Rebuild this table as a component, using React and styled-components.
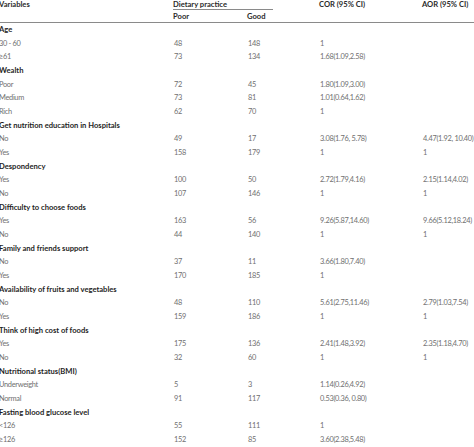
import React from "react";
import styled, { createGlobalStyle } from "styled-components";

const Global = createGlobalStyle`
  html, body { margin: 0; padding: 0; background: #fff; }
  body { font-family: Lato, "Open Sans", sans-serif; overflow: hidden; }
`;

const Table = styled.div`
  display: grid;
  grid-template-columns: 174px 74px 72px 103px 1fr;
  width: 474px;
  margin-left: -1px;
  font-size: 7.6px;
  color: #707070;
`;

const Head = styled.div`
  height: ${(p) => p.$h}px;
  line-height: ${(p) => p.$h}px;
  font-weight: 700;
  color: #2a2a2a;
  white-space: nowrap;
  grid-column: ${(p) => p.$span || "auto"};
  ${(p) => p.$rule && `border-bottom: 1px solid #8a8a8a; margin-right: 46px;`}
`;

const HeadRule = styled.div`
  grid-column: 1 / -1;
  height: 1px;
  background: #8a8a8a;
  margin-right: -2px;
`;

const Cell = styled.div`
  height: 13.68px;
  line-height: 13.68px;
  white-space: nowrap;
  font-size: 7.4px;
  letter-spacing: -0.3px;
  ${(p) => p.$cat && `grid-column: 1 / -1; font-weight: 700; color: #1e1e1e; letter-spacing: 0; font-size: 7.6px;`}
  ${(p) => p.$num && `padding-left: 1px;`}
`;

const data = [
  ["Age", [
    ["30 - 60", "48", "148", "1", ""],
    ["≥61", "73", "134", "1.68(1.09,2.58)", ""],
  ]],
  ["Wealth", [
    ["Poor", "72", "45", "1.80(1.09,3.00)", ""],
    ["Medium", "73", "81", "1.01(0.64,1.62)", ""],
    ["Rich", "62", "70", "1", ""],
  ]],
  ["Get nutrition education in Hospitals", [
    ["No", "49", "17", "3.08(1.76, 5.78)", "4.47(1.92, 10.40)"],
    ["Yes", "158", "179", "1", "1"],
  ]],
  ["Despondency", [
    ["Yes", "100", "50", "2.72(1.79,4.16)", "2.15(1.14,4.02)"],
    ["No", "107", "146", "1", "1"],
  ]],
  ["Difficulty to choose foods", [
    ["Yes", "163", "56", "9.26(5.87,14.60)", "9.66(5.12,18.24)"],
    ["No", "44", "140", "1", "1"],
  ]],
  ["Family and friends support", [
    ["No", "37", "11", "3.66(1.80,7.40)", ""],
    ["Yes", "170", "185", "1", ""],
  ]],
  ["Availability of fruits and vegetables", [
    ["No", "48", "110", "5.61(2.75,11.46)", "2.79(1.03,7.54)"],
    ["Yes", "159", "186", "1", "1"],
  ]],
  ["Think of high cost of foods", [
    ["Yes", "175", "136", "2.41(1.48,3.92)", "2.35(1.18,4.70)"],
    ["No", "32", "60", "1", "1"],
  ]],
  ["Nutritional status(BMI)", [
    ["Underweight", "5", "3", "1.14(0.26,4.92)", ""],
    ["Normal", "91", "117", "0.53(0.36, 0.80)", ""],
  ]],
  ["Fasting blood glucose level", [
    ["<126", "55", "111", "1", ""],
    ["≥126", "152", "85", "3.60(2.38,5.48)", ""],
  ]],
];

export default function App() {
  return (
    <>
      <Global />
      <Table>
        <Head $h={9}>Variables</Head>
        <Head $h={9} $span="2 / 4" $rule>Dietary practice</Head>
        <Head $h={9}>COR (95% CI)</Head>
        <Head $h={9}>AOR (95% CI)</Head>
        <Head $h={12} />
        <Head $h={12}>Poor</Head>
        <Head $h={12}>Good</Head>
        <Head $h={12} />
        <Head $h={12} />
        <HeadRule />
        {data.map(([cat, rows]) => (
          <React.Fragment key={cat}>
            <Cell $cat>{cat}</Cell>
            {rows.map((r, i) => (
              <React.Fragment key={i}>
                {r.map((v, j) => (
                  <Cell key={j} $num={j > 0}>{v}</Cell>
                ))}
              </React.Fragment>
            ))}
          </React.Fragment>
        ))}
      </Table>
    </>
  );
}
